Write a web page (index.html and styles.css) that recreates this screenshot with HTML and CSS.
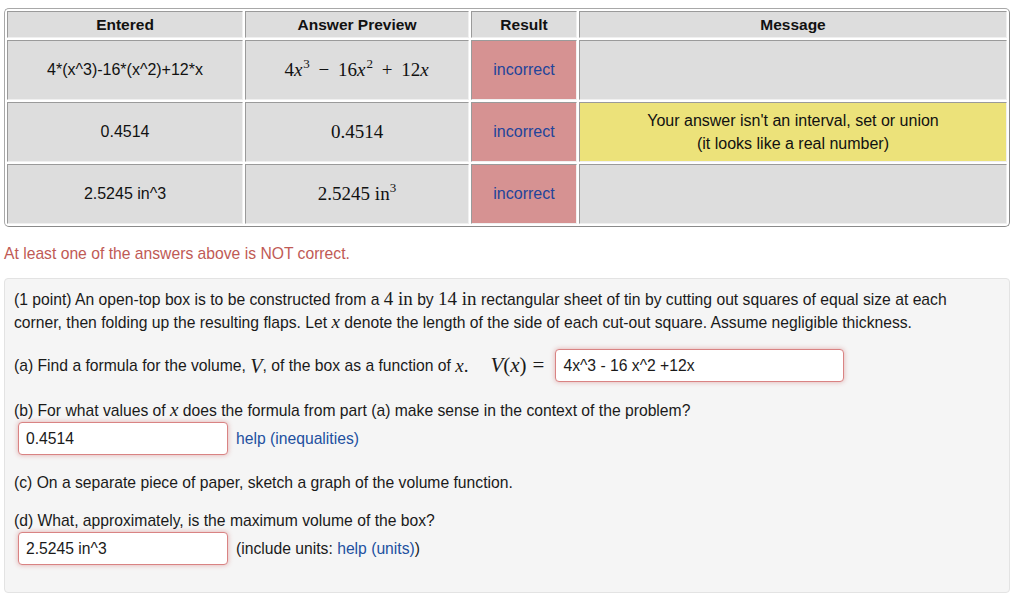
FILE: index.html
```html
<!DOCTYPE html>
<html>
<head>
<meta charset="utf-8">
<link rel="stylesheet" href="styles.css">
</head>
<body>
<div class="page">
  <table class="attempts">
    <tr>
      <th class="c-entered">Entered</th>
      <th class="c-preview">Answer Preview</th>
      <th class="c-result">Result</th>
      <th class="c-msg">Message</th>
    </tr>
    <tr>
      <td>4*(x^3)-16*(x^2)+12*x</td>
      <td class="math">4<i>x</i><sup>3</sup> <span class="op">&minus;</span> 16<i>x</i><sup>2</sup> <span class="op">+</span> 12<i>x</i></td>
      <td class="bad">incorrect</td>
      <td></td>
    </tr>
    <tr>
      <td>0.4514</td>
      <td class="math">0.4514</td>
      <td class="bad">incorrect</td>
      <td class="warn">Your answer isn't an interval, set or union<br>(it looks like a real number)</td>
    </tr>
    <tr>
      <td>2.5245 in^3</td>
      <td class="math">2.5245 in<sup>3</sup></td>
      <td class="bad">incorrect</td>
      <td></td>
    </tr>
  </table>

  <div class="status">At least one of the answers above is NOT correct.</div>

  <div class="problem">
    <p class="intro">(1 point) An open-top box is to be constructed from a <span class="m">4 in</span> by <span class="m">14 in</span> rectangular sheet of tin by cutting out squares of equal size at each corner, then folding up the resulting flaps. Let <span class="mi">x</span> denote the length of the side of each cut-out square. Assume negligible thickness.</p>

    <div class="row-a">(a) Find a formula for the volume, <span class="mi big">V</span>, of the box as a function of <span class="mi">x</span><span class="m">.</span><span class="sp"></span><span class="m big vx"><i>V</i>(<i>x</i>)<span class="eq">=</span></span><input class="ans ans-wide" value="4x^3 - 16 x^2 +12x" readonly></div>

    <div class="q q-b">(b) For what values of <span class="mi">x</span> does the formula from part (a) make sense in the context of the problem?</div>
    <div class="row"><input class="ans" value="0.4514" readonly><a class="link">help (inequalities)</a></div>

    <div class="q q-c">(c) On a separate piece of paper, sketch a graph of the volume function.</div>

    <div class="q q-d">(d) What, approximately, is the maximum volume of the box?</div>
    <div class="row"><input class="ans" value="2.5245 in^3" readonly><span class="note">(include units: <a class="link inline">help (units)</a>)</span></div>
  </div>
</div>
</body>
</html>
```

FILE: styles.css
```css
html, body {
  margin: 0;
  padding: 0;
  background: #ffffff;
}
body {
  font-family: "Liberation Sans", Arial, sans-serif;
  font-size: 15.7px;
  color: #1a1a1a;
}
.page {
  padding: 8px 14px 0 4px;
}
.attempts {
  border-collapse: separate;
  border-spacing: 2px;
  border: 1px solid #a8a8a8;
  border-right-color: #8a8a8a;
  border-bottom-color: #8a8a8a;
  border-radius: 5px;
  width: 1006px;
  table-layout: fixed;
}
.attempts th, .attempts td {
  background: #dddddd;
  border: 1px solid;
  border-color: #9a9a9a #f0f0f0 #f0f0f0 #9a9a9a;
  text-align: center;
  vertical-align: middle;
  padding: 0 4px;
  font-size: 16px;
  color: #111;
}
.attempts th {
  height: 25px;
  font-weight: bold;
  font-size: 15.5px;
}
.attempts td {
  height: 58px;
}
.c-entered { width: 226px; }
.c-preview { width: 214px; }
.c-result { width: 96px; }
.c-msg { width: auto; }
.attempts td.bad {
  background: #d69292;
  color: #22449a;
}
.attempts td.warn {
  background: #ece27a;
  line-height: 23px;
}
.attempts td.math {
  font-family: "Liberation Serif", "Times New Roman", serif;
  font-size: 19px;
}
.math i { font-style: italic; padding-right: 1px; }
.math sup {
  font-size: 13px;
  vertical-align: 0;
  position: relative;
  top: -8px;
}
.op { padding: 0 4px; }
.status {
  color: #c05a55;
  margin: 17px 0 0 0;
  line-height: 20px;
  height: 20px;
}
.problem {
  margin-top: 14px;
  background: #f5f5f5;
  border: 1px solid #e3e3e3;
  border-radius: 4px;
  padding: 9px 19px 27px 9px;
  width: 976px;
  line-height: 23px;
}
.intro {
  margin: 0;
}
.m {
  font-family: "Liberation Serif", "Times New Roman", serif;
  font-size: 19px;
  line-height: 1;
}
.mi {
  font-family: "Liberation Serif", "Times New Roman", serif;
  font-style: italic;
  font-size: 19px;
  line-height: 1;
}
.big { font-size: 20px; }
.sp { display: inline-block; width: 22px; }
.row-a {
  margin-top: 15px;
  display: flex;
  align-items: center;
  height: 33px;
  white-space: pre;
}
.vx { font-size: 21px; }
.eq { margin-left: 6px; }
.row-a .vx { margin-right: 11px; }
.q {
  margin-top: 16px;
}
.q-b { margin-top: 17px; }
.q-c { margin-top: 16px; }
.q-d { margin-top: 15px; }
.row {
  display: flex;
  align-items: center;
  height: 33px;
  margin-left: 4px;
}
.ans {
  box-sizing: border-box;
  width: 210px;
  height: 33px;
  border: 1px solid #d98383;
  border-radius: 4px;
  background: #fff;
  box-shadow: 0 0 5px rgba(200, 80, 80, 0.45);
  font-family: "Liberation Sans", Arial, sans-serif;
  font-size: 15.7px;
  color: #1a1a1a;
  padding: 0 7px;
  outline: none;
  margin: 0;
}
.ans-wide { width: 289px; }
.link {
  color: #2250a0;
  margin-left: 8px;
  text-decoration: none;
}
.note { margin-left: 8px; }
.link.inline { margin-left: 0; }
```
